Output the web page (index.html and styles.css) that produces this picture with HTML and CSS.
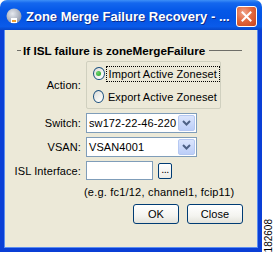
FILE: index.html
```html
<!DOCTYPE html>
<html>
<head>
<meta charset="utf-8">
<link rel="stylesheet" href="styles.css">
</head>
<body>
<div class="page">
  <div class="window">
    <div class="titlebar">
      <svg class="app-icon" width="16" height="16" viewBox="0 0 16 16">
        <defs>
          <radialGradient id="g1" cx="40%" cy="35%" r="70%">
            <stop offset="0" stop-color="#e6e9ef"/>
            <stop offset="1" stop-color="#8d95a6"/>
          </radialGradient>
        </defs>
        <circle cx="8" cy="8" r="7.5" fill="url(#g1)"/>
        <rect x="5" y="10" width="6" height="5" fill="#fff"/>
        <rect x="6" y="12" width="4" height="2" fill="#f0a030"/>
      </svg>
      <span class="title">Zone Merge Failure Recovery - ...</span>
      <span class="close-btn">
        <svg width="13" height="13" viewBox="0 0 13 13"><path d="M2.5 2.5 L10.5 10.5 M10.5 2.5 L2.5 10.5" stroke="#fff" stroke-width="2" stroke-linecap="square"/></svg>
      </span>
    </div>
    <div class="client">
      <div class="legend">
        <span class="dash"></span>
        <span class="legend-text">If ISL failure is zoneMergeFailure</span>
        <span class="rule"></span>
      </div>
      <div class="form">
        <span class="lbl">Action:</span>
        <div class="radio-box">
          <div class="radio-row"><span class="radio checked"></span><span class="radio-text focus">Import Active Zoneset</span></div>
          <div class="radio-row"><span class="radio"></span><span class="radio-text">Export Active Zoneset</span></div>
        </div>
        <span class="lbl">Switch:</span>
        <div class="combo">
          <span class="combo-val">sw172-22-46-220</span>
          <span class="combo-btn"><svg width="9" height="6" viewBox="0 0 9 6"><path d="M1 1 L4.5 4.5 L8 1" fill="none" stroke="#4d6185" stroke-width="2"/></svg></span>
        </div>
        <span class="lbl">VSAN:</span>
        <div class="combo">
          <span class="combo-val">VSAN4001</span>
          <span class="combo-btn"><svg width="9" height="6" viewBox="0 0 9 6"><path d="M1 1 L4.5 4.5 L8 1" fill="none" stroke="#4d6185" stroke-width="2"/></svg></span>
        </div>
        <span class="lbl">ISL Interface:</span>
        <div class="isl">
          <span class="textfield"></span>
          <span class="dots-btn">...</span>
        </div>
      </div>
      <div class="hint">(e.g. fc1/12, channel1, fcip11)</div>
      <div class="buttons">
        <span class="btn btn-ok">OK</span>
        <span class="btn btn-close">Close</span>
      </div>
    </div>
  </div>
  <div class="figno">182608</div>
</div>
</body>
</html>
```
FILE: styles.css
```css
html, body {
  margin: 0;
  padding: 0;
  background: #ffffff;
}
body {
  font-family: "Liberation Sans", Arial, sans-serif;
  font-size: 11px;
  color: #000;
}
.page {
  display: flex;
  align-items: flex-end;
  width: 274px;
  height: 255px;
}
.window {
  width: 262px;
  height: 252px;
  display: flex;
  flex-direction: column;
  border-radius: 7px 7px 0 0;
  overflow: hidden;
  background: #ece9d8;
  align-self: flex-start;
}
.titlebar {
  height: 30px;
  flex: none;
  display: flex;
  align-items: center;
  padding: 0 5px 0 6px;
  background: linear-gradient(#3d8ff7 0%, #1467ee 10%, #0558e8 35%, #0454e4 60%, #0a5bea 88%, #0747c9 100%);
}
.app-icon {
  flex: none;
  margin-right: 4px;
  margin-top: 2px;
}
.title {
  flex: 1;
  color: #fff;
  font-weight: bold;
  font-size: 13px;
  text-shadow: 1px 1px 0 #0b2a8a;
  white-space: nowrap;
  margin-top: 2px;
}
.close-btn {
  flex: none;
  width: 19px;
  height: 19px;
  border: 1px solid #fff;
  border-radius: 3px;
  background: radial-gradient(circle at 35% 30%, #f0a58c 0%, #e2693f 45%, #c8421c 100%);
  display: flex;
  align-items: center;
  justify-content: center;
  margin-top: 2px;
}
.client {
  flex: 1;
  display: flex;
  flex-direction: column;
  border-left: 4px solid #0a3fd6;
  border-right: 4px solid #0a3fd6;
  border-bottom: 4px solid #0a3fd6;
  box-shadow: inset 1px 0 0 #5b8ef0, inset -1px 0 0 #5b8ef0, inset 0 -1px 0 #5b8ef0;
  padding: 13px 15px 0 13px;
}
.legend {
  display: flex;
  align-items: center;
  height: 14px;
}
.dash {
  width: 4px;
  height: 1px;
  background: #6e6e68;
  margin-right: 2px;
}
.legend-text {
  font-weight: bold;
  font-size: 11.7px;
  white-space: nowrap;
}
.rule {
  flex: 1;
  height: 1px;
  background: #6e6e68;
  margin-left: 4px;
  margin-right: 1px;
}
.form {
  display: grid;
  grid-template-columns: 64px auto;
  column-gap: 5px;
  row-gap: 4px;
  margin-top: 4px;
  align-items: center;
  justify-items: start;
}
.lbl {
  justify-self: end;
  white-space: nowrap;
  letter-spacing: 0.1px;
}
.radio-box {
  width: 133px;
  border: 1px solid #d0d0bf;
  border-radius: 2px;
}
.radio-row {
  height: 23px;
  display: flex;
  align-items: center;
  padding-left: 6px;
}
.radio {
  box-sizing: border-box;
  width: 13px;
  height: 13px;
  border: 1px solid #1c5180;
  border-radius: 50%;
  background: linear-gradient(135deg, #dcdcd7 0%, #f4f4f0 60%, #ffffff 100%);
  display: flex;
  align-items: center;
  justify-content: center;
  margin-right: 1px;
}
.radio.checked::after {
  content: "";
  width: 5px;
  height: 5px;
  border-radius: 50%;
  background: radial-gradient(circle at 35% 35%, #6fd36f, #21a121);
}
.radio-text {
  padding: 1px 2px;
  border: 1px solid transparent;
  letter-spacing: 0.1px;
  white-space: nowrap;
}
.radio-text.focus {
  border: 1px dotted #000;
}
.combo {
  box-sizing: border-box;
  width: 111px;
  height: 20px;
  background: #fff;
  border: 1px solid #7f9db9;
  display: flex;
  align-items: stretch;
}
.combo-val {
  flex: 1;
  display: flex;
  align-items: center;
  padding-left: 2px;
  letter-spacing: 0.1px;
  white-space: nowrap;
}
.combo-btn {
  width: 15px;
  margin: 1px;
  border: 1px solid #b5c8f2;
  border-radius: 2px;
  background: linear-gradient(#dbe5fc, #bccef8);
  display: flex;
  align-items: center;
  justify-content: center;
}
.isl {
  display: flex;
  align-items: center;
  gap: 5px;
}
.textfield {
  box-sizing: border-box;
  width: 67px;
  height: 19px;
  background: #fff;
  border: 1px solid #7f9db9;
}
.dots-btn {
  box-sizing: border-box;
  width: 14px;
  height: 16px;
  border: 1px solid #003c74;
  border-radius: 2px;
  background: linear-gradient(#ffffff, #ecebe6);
  font-size: 11px;
  line-height: 11px;
  text-align: center;
  letter-spacing: -0.5px;
}
.hint {
  margin-top: 5px;
  padding-left: 67px;
  height: 14px;
  line-height: 14px;
  letter-spacing: 0.2px;
  white-space: nowrap;
}
.buttons {
  display: flex;
  justify-content: flex-end;
  gap: 8px;
  margin-top: 5px;
}
.btn {
  box-sizing: border-box;
  height: 20px;
  border: 1px solid #003c74;
  border-radius: 3px;
  background: linear-gradient(#ffffff 0%, #f4f4f0 60%, #e3e2da 100%);
  display: flex;
  align-items: center;
  justify-content: center;
  letter-spacing: 0.1px;
}
.btn-ok { width: 46px; }
.btn-close { width: 56px; }
.figno {
  writing-mode: vertical-rl;
  transform: rotate(180deg);
  font-family: "Liberation Sans", Arial, sans-serif;
  font-size: 10px;
  line-height: 11px;
  margin-left: 1px;
  margin-bottom: 3px;
}
```
